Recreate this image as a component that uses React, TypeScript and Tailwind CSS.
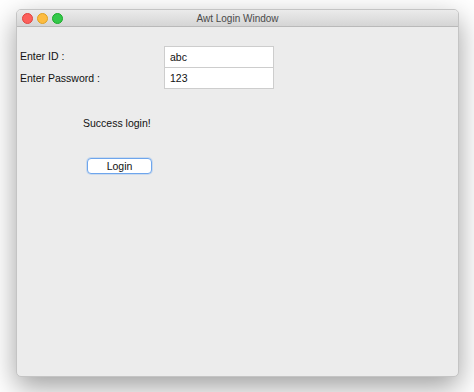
import React from 'react';

const font = { fontFamily: '"Liberation Sans", Arial, sans-serif' };

const Field = ({ value }: { value: string }) => (
  <div className="h-[22px] w-[110px] border border-[#cdcdcd] bg-white pl-[5px] text-[10.5px] leading-[20px] text-[#111]">
    {value}
  </div>
);

export default function App() {
  return (
    <div className="h-[392px] w-[474px] overflow-hidden bg-white pl-[16px] pt-[9px]" style={font}>
      <div className="flex h-[368px] w-[443px] flex-col overflow-hidden rounded-[5px] border border-[#c4c4c4] bg-[#ececec] shadow-[0_10px_28px_rgba(0,0,0,0.38)]">
        {/* title bar */}
        <div className="relative flex h-[17px] shrink-0 items-center border-b border-[#b9b9b9] bg-gradient-to-b from-[#ebebeb] to-[#d5d5d5] pl-[5px]">
          <div className="flex gap-[4px]">
            <span className="h-[11px] w-[11px] rounded-full border border-[#e0443e] bg-[#fc605c]" />
            <span className="h-[11px] w-[11px] rounded-full border border-[#dea123] bg-[#fdbc40]" />
            <span className="h-[11px] w-[11px] rounded-full border border-[#1aab29] bg-[#34c84a]" />
          </div>
          <div className="absolute inset-0 flex items-center justify-center text-[10px] text-[#4a4a4a]">
            Awt Login Window
          </div>
        </div>

        {/* content */}
        <div className="flex flex-col pl-[3px] pt-[19px] text-[10.5px] text-[#111]">
          <div className="grid grid-cols-[144px_110px] items-center">
            <span>Enter ID :</span>
            <Field value="abc" />
          </div>
          <div className="grid grid-cols-[144px_110px] items-center">
            <span>Enter Password :</span>
            <div className="-mt-px">
              <Field value="123" />
            </div>
          </div>

          <div className="ml-[63px] mt-[27px] leading-[14px]">Success login!</div>

          <div className="ml-[67px] mt-[28px]">
            <button className="flex h-[16px] w-[65px] items-center justify-center rounded-[4px] border border-[#6ea5ec] bg-white text-[10.5px] leading-none text-[#111] shadow-[0_0_0_1px_rgba(140,185,240,0.35)]">
              Login
            </button>
          </div>
        </div>
      </div>
    </div>
  );
}
